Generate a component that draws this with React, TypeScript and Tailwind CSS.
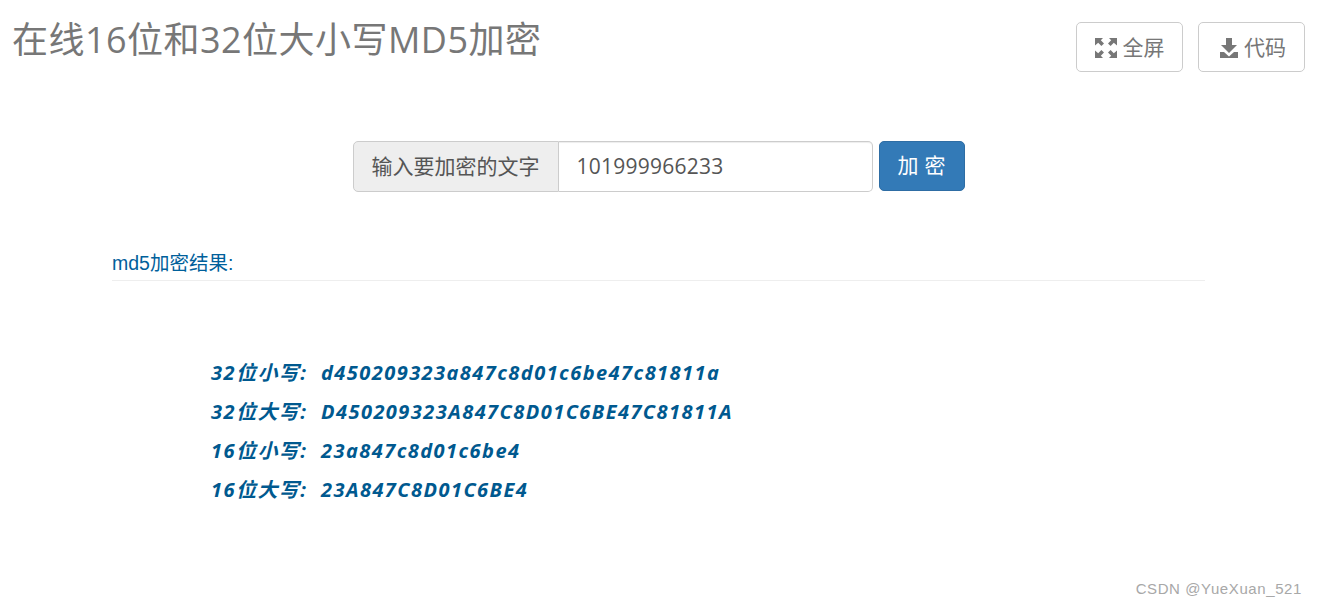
const cjk = "font-['Liberation_Sans','Noto_Sans_CJK_SC',sans-serif]";
const wide = "font-['Open_Sans','Noto_Sans_CJK_SC',sans-serif]";

const results = [
  { label: "32位小写:", value: "d450209323a847c8d01c6be47c81811a" },
  { label: "32位大写:", value: "D450209323A847C8D01C6BE47C81811A" },
  { label: "16位小写:", value: "23a847c8d01c6be4" },
  { label: "16位大写:", value: "23A847C8D01C6BE4" },
];

function ExpandIcon() {
  return (
    <svg width="22" height="20" viewBox="0 0 22 20" fill="#777777" aria-hidden="true">
      <path d="M0 0h8L5.8 2.2 9 5.4 6.4 8 3.2 4.8 0 7.6z" />
      <path d="M22 0h-8l2.2 2.2L13 5.4 15.6 8l3.2-3.2L22 7.6z" />
      <path d="M0 20h8l-2.2-2.2L9 14.6 6.4 12l-3.2 3.2L0 12.4z" />
      <path d="M22 20h-8l2.2-2.2-3.2-3.2 2.6-2.6 3.2 3.2 3.2-2.8z" />
    </svg>
  );
}

function DownloadIcon() {
  return (
    <svg width="20" height="20" viewBox="0 0 20 20" fill="#777777" aria-hidden="true">
      <path d="M7 0h6v7h5l-8 8-8-8h5z" />
      <path d="M1 14h4l5 4.5 5-4.5h4v6H1z" />
    </svg>
  );
}

export default function App() {
  return (
    <div className={`relative h-[607px] w-[1317px] overflow-hidden bg-white ${cjk}`}>
      <div className="flex items-start justify-between px-3 pt-[22px]">
        <h1 className={`mt-[-5px] text-[36px] leading-[46px] font-normal tracking-[0.47px] text-[#777777] ${wide}`}>
          在线16位和32位大小写MD5加密
        </h1>
        <div className="flex gap-[15px]">
          <button className="flex h-[50px] w-[107px] items-center justify-center gap-[6px] rounded-[5px] border border-[#cccccc] pt-px text-[21px] text-[#777777]">
            <ExpandIcon />
            全屏
          </button>
          <button className="flex h-[50px] w-[107px] items-center justify-center gap-[5px] rounded-[5px] border border-[#cccccc] pt-px pl-[2px] text-[21px] text-[#777777]">
            <DownloadIcon />
            代码
          </button>
        </div>
      </div>

      <div className="mt-[69px] flex justify-center gap-[6px]">
        <div className="flex h-[51px] w-[520px] text-[21px] text-[#555555]">
          <span className="flex w-[206px] items-center justify-center rounded-l-[5px] border border-[#cccccc] bg-[#eeeeee]">
            输入要加密的文字
          </span>
          <input
            readOnly
            value="101999966233"
            className={`min-w-0 flex-1 rounded-r-[5px] border border-l-0 border-[#cccccc] px-[18px] text-[21px] tracking-[0.25px] shadow-[inset_0_1px_1px_rgba(0,0,0,0.075)] outline-none ${wide}`}
          />
        </div>
        <button className="h-[50px] w-[86px] rounded-[5px] border border-[#2e6da4] bg-[#337ab7] text-[21px] text-white">
          加 密
        </button>
      </div>

      <div className="mx-[112px] mt-[58px] border-b border-[#eeeeee] pb-[3px]">
        <span className="text-[19.5px] leading-[26px] text-[#00609b]">md5加密结果:</span>
      </div>

      <div className={`mt-[72px] pl-[211px] text-[20px] leading-[39px] font-bold tracking-[1.45px] text-[#00598f] italic ${wide}`}>
        {results.map((row) => (
          <div key={row.label} className="flex">
            <span className="w-[110px]">{row.label}</span>
            <span>{row.value}</span>
          </div>
        ))}
      </div>

      <span className="absolute right-[15px] bottom-[8px] text-[15px] leading-[20px] tracking-[0.6px] text-[#a8a8a8]">
        CSDN @YueXuan_521
      </span>
    </div>
  );
}
